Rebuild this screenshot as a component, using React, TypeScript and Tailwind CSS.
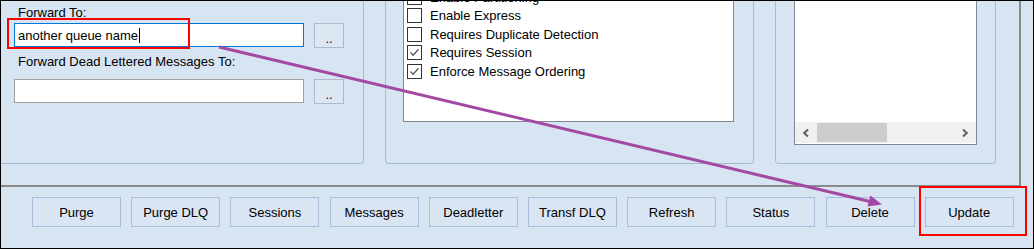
import React from "react";

const buttons = ["Purge", "Purge DLQ", "Sessions", "Messages", "Deadletter", "Transf DLQ", "Refresh", "Status", "Delete", "Update"];

const options = [
  { label: "Enable Partitioning", checked: false },
  { label: "Enable Express", checked: false },
  { label: "Requires Duplicate Detection", checked: false },
  { label: "Requires Session", checked: true },
  { label: "Enforce Message Ordering", checked: true },
];

function CheckBox({ checked }: { checked: boolean }) {
  return (
    <div className="flex h-[15px] w-[15px] shrink-0 items-center justify-center border border-[#333] bg-white">
      {checked && (
        <svg width="11" height="11" viewBox="0 0 11 11">
          <path d="M1.5 5.5 L4.2 8.3 L9.5 2.2" fill="none" stroke="#5a5a5a" strokeWidth="1.3" />
        </svg>
      )}
    </div>
  );
}

function BrowseButton() {
  return (
    <div className="ml-[10px] flex h-[25px] w-[30px] items-end justify-center border border-[#adb9cc] bg-[#dce7f3] pb-[1px] text-[13px] leading-[15px]">
      ..
    </div>
  );
}

export default function App() {
  return (
    <div className="relative h-[249px] w-[1034px] overflow-hidden border border-black bg-[#d7e4f2] font-['Liberation_Sans',Arial,sans-serif] text-[13px] text-black">
      {/* upper panel */}
      <div className="h-[186px] w-[1020px] border-r-2 border-b-2 border-[#8a8a8a]">
        <div className="flex h-[163px] items-stretch">
          {/* left group */}
          <div className="w-[363px] rounded-br-[4px] border-r border-b border-[#a6bad3] pl-[13px]">
            <div className="ml-[4px] mt-[4px] leading-[15px]">Forward To:</div>
            <div className="mt-[3px] flex">
              <div className="flex h-[24px] w-[290px] items-center border border-[#0078d7] bg-white pl-[3px] leading-[15px]">
                another queue name
                <span className="ml-[1px] inline-block h-[15px] w-px bg-black" />
              </div>
              <BrowseButton />
            </div>
            <div className="ml-[4px] mt-[6px] leading-[15px]">Forward Dead Lettered Messages To:</div>
            <div className="mt-[10px] flex">
              <div className="h-[24px] w-[290px] border border-[#a0a0a0] bg-white" />
              <BrowseButton />
            </div>
          </div>

          {/* middle group */}
          <div className="ml-[21px] w-[369px] rounded-b-[4px] border-x border-b border-[#a6bad3] pl-[17px]">
            <div className="h-[121px] w-[331px] overflow-hidden border-x border-b border-[#828790] bg-white">
              <div className="-mt-[13px] pl-[3px]">
                {options.map((o) => (
                  <div key={o.label} className="flex h-[18.5px] items-center gap-[8px] leading-[15px]">
                    <CheckBox checked={o.checked} />
                    <span>{o.label}</span>
                  </div>
                ))}
              </div>
            </div>
          </div>

          {/* right group */}
          <div className="ml-[21px] w-[221px] rounded-b-[4px] border-x border-b border-[#a6bad3] pl-[18px]">
            <div className="flex h-[144px] w-[183px] flex-col justify-end border-x border-b border-[#828790] bg-white pb-[1px]">
              <div className="flex h-[21px] items-center bg-[#f0f0f0]">
                <div className="flex w-[22px] items-center justify-center">
                  <svg width="8" height="10" viewBox="0 0 8 10">
                    <path d="M6 1.5 L2.2 5 L6 8.5" fill="none" stroke="#606060" strokeWidth="2" />
                  </svg>
                </div>
                <div className="h-[19px] w-[70px] bg-[#cdcdcd]" />
                <div className="flex-1" />
                <div className="flex w-[22px] items-center justify-center">
                  <svg width="8" height="10" viewBox="0 0 8 10">
                    <path d="M2 1.5 L5.8 5 L2 8.5" fill="none" stroke="#606060" strokeWidth="2" />
                  </svg>
                </div>
              </div>
            </div>
          </div>
        </div>
      </div>

      {/* button bar */}
      <div className="flex gap-[10.2px] pl-[31px] pt-[10px]">
        {buttons.map((b) => (
          <div
            key={b}
            className="flex h-[30px] w-[89px] items-center justify-center border border-[#a9bedb] bg-[#d9e5f3] leading-[15px]"
          >
            {b}
          </div>
        ))}
      </div>

      {/* annotations */}
      <div className="absolute left-[6px] top-[17px] h-[31px] w-[183px] border-2 border-[#ff0000]" />
      <div className="absolute left-[918px] top-[185px] h-[50px] w-[108px] border-2 border-[#ff0000]" />
      <svg className="pointer-events-none absolute -left-px -top-px h-[249px] w-[1034px]" viewBox="0 0 1034 249">
        <line x1="219" y1="47" x2="870" y2="201.5" stroke="#a349a4" strokeWidth="3" />
        <path d="M882 204.5 L867.5 206.5 L870.3 195.6 Z" fill="#a349a4" />
      </svg>
    </div>
  );
}
